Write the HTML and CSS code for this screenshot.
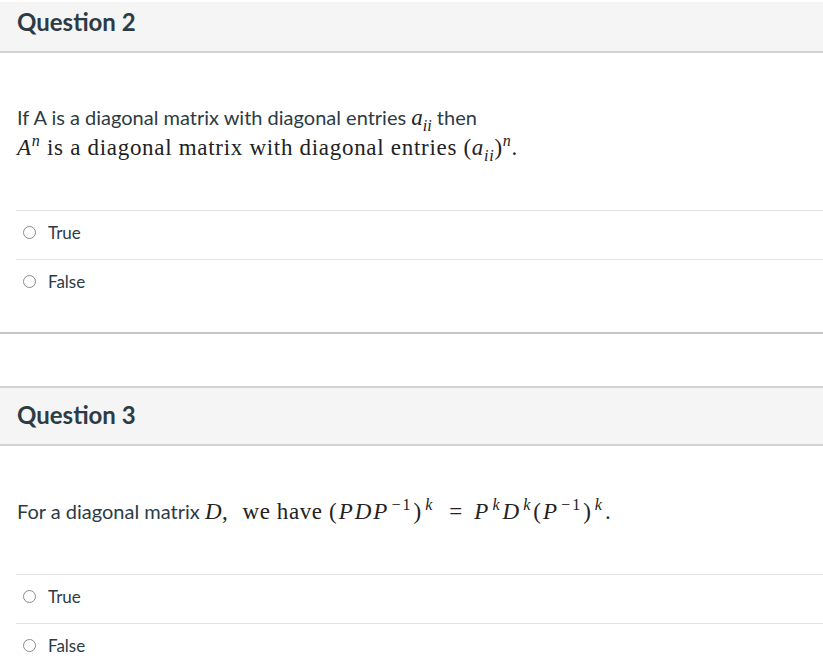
FILE: index.html
```html
<!DOCTYPE html>
<html lang="en">
<head>
<meta charset="utf-8">
<title>Quiz</title>
<link rel="stylesheet" href="styles.css">
</head>
<body>
<div class="quiz">
  <section class="question q-first">
    <div class="q-header"><h2 class="q-title">Question 2</h2></div>
    <div class="q-text">
      <p>If A is a diagonal matrix with diagonal entries <span class="m"><i>a</i><sub><i>ii</i></sub></span> then<br><span class="mt"><i>A</i><sup><i>n</i></sup> is a diagonal matrix with diagonal entries (<i>a</i><sub><i>ii</i></sub>)<sup><i>n</i></sup>.</span></p>
    </div>
    <div class="answers">
      <label class="answer"><span class="radio"></span><span class="label">True</span></label>
      <label class="answer"><span class="radio"></span><span class="label">False</span></label>
    </div>
  </section>
  <section class="question">
    <div class="q-header"><h2 class="q-title">Question 3</h2></div>
    <div class="q-text">
      <p>For a diagonal matrix <span class="mq"><i>D</i>,<span class="sp"></span>we have <span class="f">(<i>PDP</i><sup>&minus;1</sup>)<sup><i>k</i></sup><span class="eq">=</span><i>P</i><sup><i>k</i></sup><i>D</i><sup><i>k</i></sup>(<i>P</i><sup>&minus;1</sup>)<sup><i>k</i></sup>.</span></span></p>
    </div>
    <div class="answers">
      <label class="answer"><span class="radio"></span><span class="label">True</span></label>
      <label class="answer"><span class="radio"></span><span class="label">False</span></label>
    </div>
  </section>
</div>
</body>
</html>
```
FILE: styles.css
```css
html, body {
  margin: 0;
  padding: 0;
  background: #ffffff;
}
body {
  font-family: Lato, "Liberation Sans", sans-serif;
  color: #2d3b45;
  font-size: 17px;
}
.quiz {
  display: flex;
  flex-direction: column;
  gap: 52px;
  padding-top: 2px;
}
.question {
  border-bottom: 2px solid #c6c6c6;
}
.q-header {
  box-sizing: border-box;
  background: #f5f5f5;
  border-top: 2px solid #d2d2d2;
  border-bottom: 2px solid #d2d2d2;
  height: 60px;
  padding: 12px 0 0 17px;
}
.q-first .q-header {
  border-top: none;
  height: 51px;
  padding-top: 5px;
}
.q-title {
  margin: 0;
  font-size: 24px;
  font-weight: 700;
  line-height: 30px;
  color: #2d3b45;
}
.q-text {
  padding: 50px 17px 47px 17px;
}
.q-first .q-text {
  padding-top: 49px;
  padding-bottom: 47px;
}
.q-text p {
  margin: 0;
  font-size: 20px;
  line-height: 30px;
}
.m, .mt, .mq {
  font-family: "Liberation Serif", serif;
  font-size: 23px;
  color: #222;
}
.m {
  line-height: 1;
}
.mt {
  letter-spacing: 0.7px;
}
.mq {
  letter-spacing: 0.6px;
}
.f {
  letter-spacing: 2px;
}
.m sub, .mt sub, .mt sup, .mq sup {
  font-size: 0.7em;
  line-height: 0;
}
.mq sup {
  margin-left: 2px;
  margin-right: 1px;
}
.sp {
  display: inline-block;
  width: 14px;
}
.eq {
  margin: 0 10px 0 14px;
}
.answers {
  margin-left: 16px;
  padding-bottom: 24px;
}
.answer {
  display: flex;
  align-items: center;
  box-sizing: border-box;
  height: 49px;
  padding-bottom: 5px;
  border-top: 1px solid #e2e2e2;
}
.radio {
  width: 11px;
  height: 11px;
  border: 1px solid #8a8a8a;
  border-radius: 50%;
  margin-left: 7px;
  margin-right: 12px;
}
```
